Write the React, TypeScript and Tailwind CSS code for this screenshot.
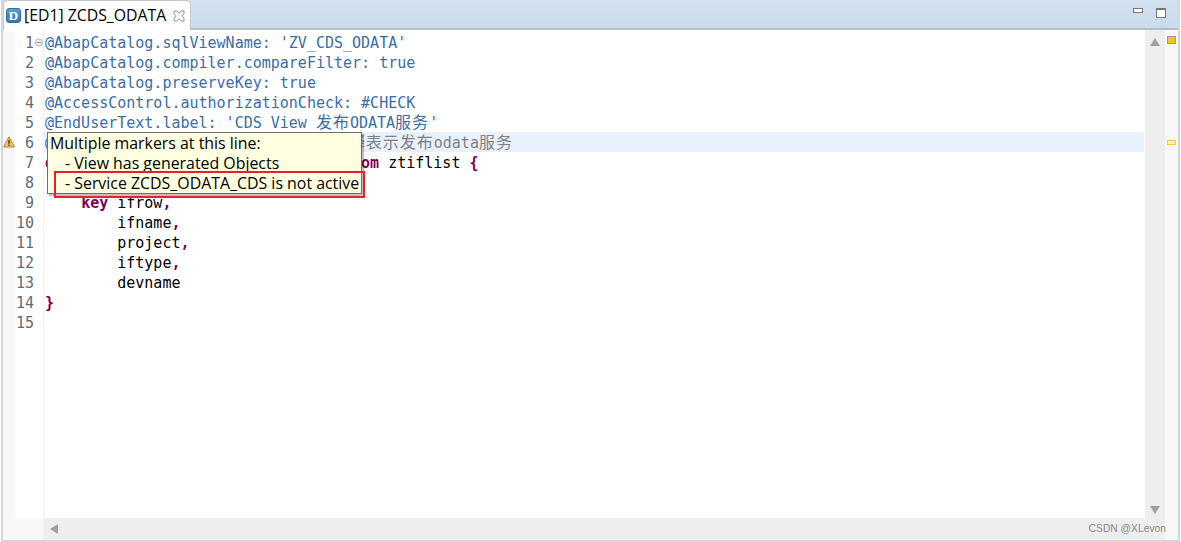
const mono = "font-['DejaVu_Sans_Mono','Noto_Sans_CJK_SC',monospace]";

function Cjk({ children }: { children: string }) {
  return <span className="font-['Noto_Sans_CJK_SC',sans-serif] text-[16px] leading-none tracking-[1px]">{children}</span>;
}

function Kw({ children }: { children: string }) {
  return <span className="font-bold text-[#7f0055]">{children}</span>;
}

const lines: React.ReactNode[] = [
  <span className="text-[#3a6ea5]">@AbapCatalog.sqlViewName: 'ZV_CDS_ODATA'</span>,
  <span className="text-[#3a6ea5]">@AbapCatalog.compiler.compareFilter: true</span>,
  <span className="text-[#3a6ea5]">@AbapCatalog.preserveKey: true</span>,
  <span className="text-[#3a6ea5]">@AccessControl.authorizationCheck: #CHECK</span>,
  <span className="text-[#3a6ea5]">@EndUserText.label: 'CDS View <Cjk>发布</Cjk>ODATA<Cjk>服务</Cjk>'</span>,
  <span className="text-[#3a6ea5]">
    @OData.publish: true <span className="ml-[2px] text-[#808080]">// <Cjk>加上这个注释表示发布</Cjk>odata<Cjk>服务</Cjk></span>
  </span>,
  <span><Kw>define view</Kw> zcds_odata <Kw>as select from</Kw> ztiflist <Kw>{"{"}</Kw></span>,
  <span>    <Kw>key</Kw> ifname,</span>,
  <span>    <Kw>key</Kw> ifrow<Kw>,</Kw></span>,
  <span>        ifname<Kw>,</Kw></span>,
  <span>        project<Kw>,</Kw></span>,
  <span>        iftype<Kw>,</Kw></span>,
  <span>        devname</span>,
  <Kw>{"}"}</Kw>,
  <span />,
];

function TabIcon() {
  return (
    <div className="flex h-[15px] w-[15px] shrink-0 items-center justify-center rounded-[3px] border border-[#2f6f9f] bg-gradient-to-b from-[#5a9ccb] to-[#3479ab] font-['Liberation_Serif',serif] text-[13px] leading-none font-bold text-white">
      D
    </div>
  );
}

function CloseIcon() {
  return (
    <svg width="12" height="12" viewBox="0 0 12 12" className="shrink-0">
      <path d="M1 1h2.800l2.200 2.200 2.200-2.200h2.800v2.800l-2.200 2.200 2.200 2.200v2.800h-2.800l-2.200-2.200-2.200 2.200h-2.800v-2.800l2.200-2.200-2.200-2.200z" fill="#fff" stroke="#8a8a8a" />
    </svg>
  );
}

function WarnIcon() {
  return (
    <svg width="12" height="12" viewBox="0 0 12 12">
      <path d="M6 .8 11.500 11H.5z" fill="#f2c261" stroke="#b08a3c" strokeLinejoin="round" />
      <rect x="5.300" y="4" width="1.400" height="3.800" fill="#4a3a10" />
      <rect x="5.300" y="8.600" width="1.400" height="1.400" fill="#4a3a10" />
    </svg>
  );
}

function FoldIcon() {
  return (
    <svg width="9" height="9" viewBox="0 0 9 9">
      <circle cx="4.500" cy="4.500" r="4" fill="#eef1f4" stroke="#a4aeb8" />
      <rect x="2" y="4" width="5" height="1" fill="#7c8894" />
    </svg>
  );
}

export default function App() {
  return (
    <div className="relative h-[542px] w-[1181px] overflow-hidden bg-white px-[1px]">
      <div className="flex h-full flex-col border-x-2 border-b-2 border-[#d4d6d9]">
        <div className="flex h-[30px] shrink-0 items-end justify-between border-b-2 border-[#b8bcc4] bg-gradient-to-b from-[#d3e1ef] to-[#c9dbec]">
          <div className="-mb-[2px] flex h-[30px] w-[188px] items-center gap-[3px] rounded-t-[5px] border border-b-0 border-[#c4c8cc] bg-white pr-[5px] pl-[2px] font-['Open_Sans',sans-serif] text-[15.8px] text-black">
            <TabIcon />
            <span className="whitespace-nowrap">[ED1] ZCDS_ODATA</span>
            <span className="ml-auto"><CloseIcon /></span>
          </div>
          <div className="mr-[12px] mb-[10px] flex items-start gap-[13px]">
            <div className="h-[5px] w-[10px] border border-[#777] bg-white" />
            <div className="h-[10px] w-[10px] border border-t-2 border-[#777] bg-white" />
          </div>
        </div>

        <div className="flex min-h-0 flex-1">
          <div className="flex w-[40px] shrink-0 flex-col">
            <div className={`flex flex-1 flex-col pt-[2px] text-[15px] leading-5 text-[#5f6b75] ${mono}`}>
              {lines.map((_, i) => (
                <div key={i} className="flex h-5 items-center">
                  <div className="flex h-5 w-[12px] items-center justify-center bg-[#f7f7f7]">
                    {i === 5 && <WarnIcon />}
                  </div>
                  <div className="w-[19px] pt-[1px] text-right">{i + 1}</div>
                  <div className="flex w-[9px] items-center pt-[1px] pl-[1px]">{i === 0 && <FoldIcon />}</div>
                </div>
              ))}
              <div className="flex flex-1">
                <div className="w-[12px] bg-[#f7f7f7]" />
              </div>
            </div>
            <div className="h-[22px] shrink-0 bg-[#f7f7f7]" />
          </div>

          <div className="flex min-w-0 flex-1 flex-col border-l border-[#f0f0f0]">
            <div className={`min-h-0 flex-1 overflow-hidden pt-[2px] text-[15px] leading-5 whitespace-pre text-black ${mono}`}>
              {lines.map((line, i) => (
                <div key={i} className={`mr-[1px] h-5 pt-[1px] pl-[1px] ${i === 5 ? 'bg-[#e8f2fe]' : ''}`}>{line}</div>
              ))}
            </div>
            <div className="flex h-[22px] shrink-0 items-center bg-[#eeeeee] pl-[6px]">
              <div className="h-0 w-0 border-y-[5px] border-r-[8px] border-y-transparent border-r-[#a0a0a0]" />
            </div>
          </div>

          <div className="flex w-[20px] shrink-0 flex-col items-center justify-between bg-[#eeeeee] pt-[8px] pb-[26px]">
            <div className="h-0 w-0 border-x-[5px] border-b-[8px] border-x-transparent border-b-[#a0a0a0]" />
            <div className="h-0 w-0 border-x-[5px] border-t-[8px] border-x-transparent border-t-[#a0a0a0]" />
          </div>
          <div className="flex w-[13px] shrink-0 flex-col bg-[#f7f7f7] pt-[6px] pl-[2px]">
            <div className="h-[8px] w-[9px] border border-[#9a9a9a] bg-[#f2c32e]" />
            <div className="mt-[96px] h-[5px] w-[9px] border border-[#efc94e] bg-[#fdf0c0]" />
          </div>
        </div>
      </div>

      <div className="absolute top-[132px] left-[47px] flex h-[62px] w-[315px] flex-col border border-[#6f6f6f] bg-[#ffffe1] pl-[2px] font-['Open_Sans',sans-serif] text-[15.9px] leading-5 text-black shadow-[2px_2px_1px_rgba(0,0,0,0.25)]">
        <div>Multiple markers at this line:</div>
        <div className="pl-[15px]">- View has generated Objects</div>
        <div className="pl-[15px]">- Service ZCDS_ODATA_CDS is not active</div>
      </div>
      <div className="absolute top-[171px] left-[54px] h-[27px] w-[311px] border-2 border-[#e8202a]" />
      <div className="absolute top-[521px] right-[15px] font-['Liberation_Sans',sans-serif] text-[10.3px] text-[#8a8a8a]">CSDN @XLevon</div>
    </div>
  );
}
